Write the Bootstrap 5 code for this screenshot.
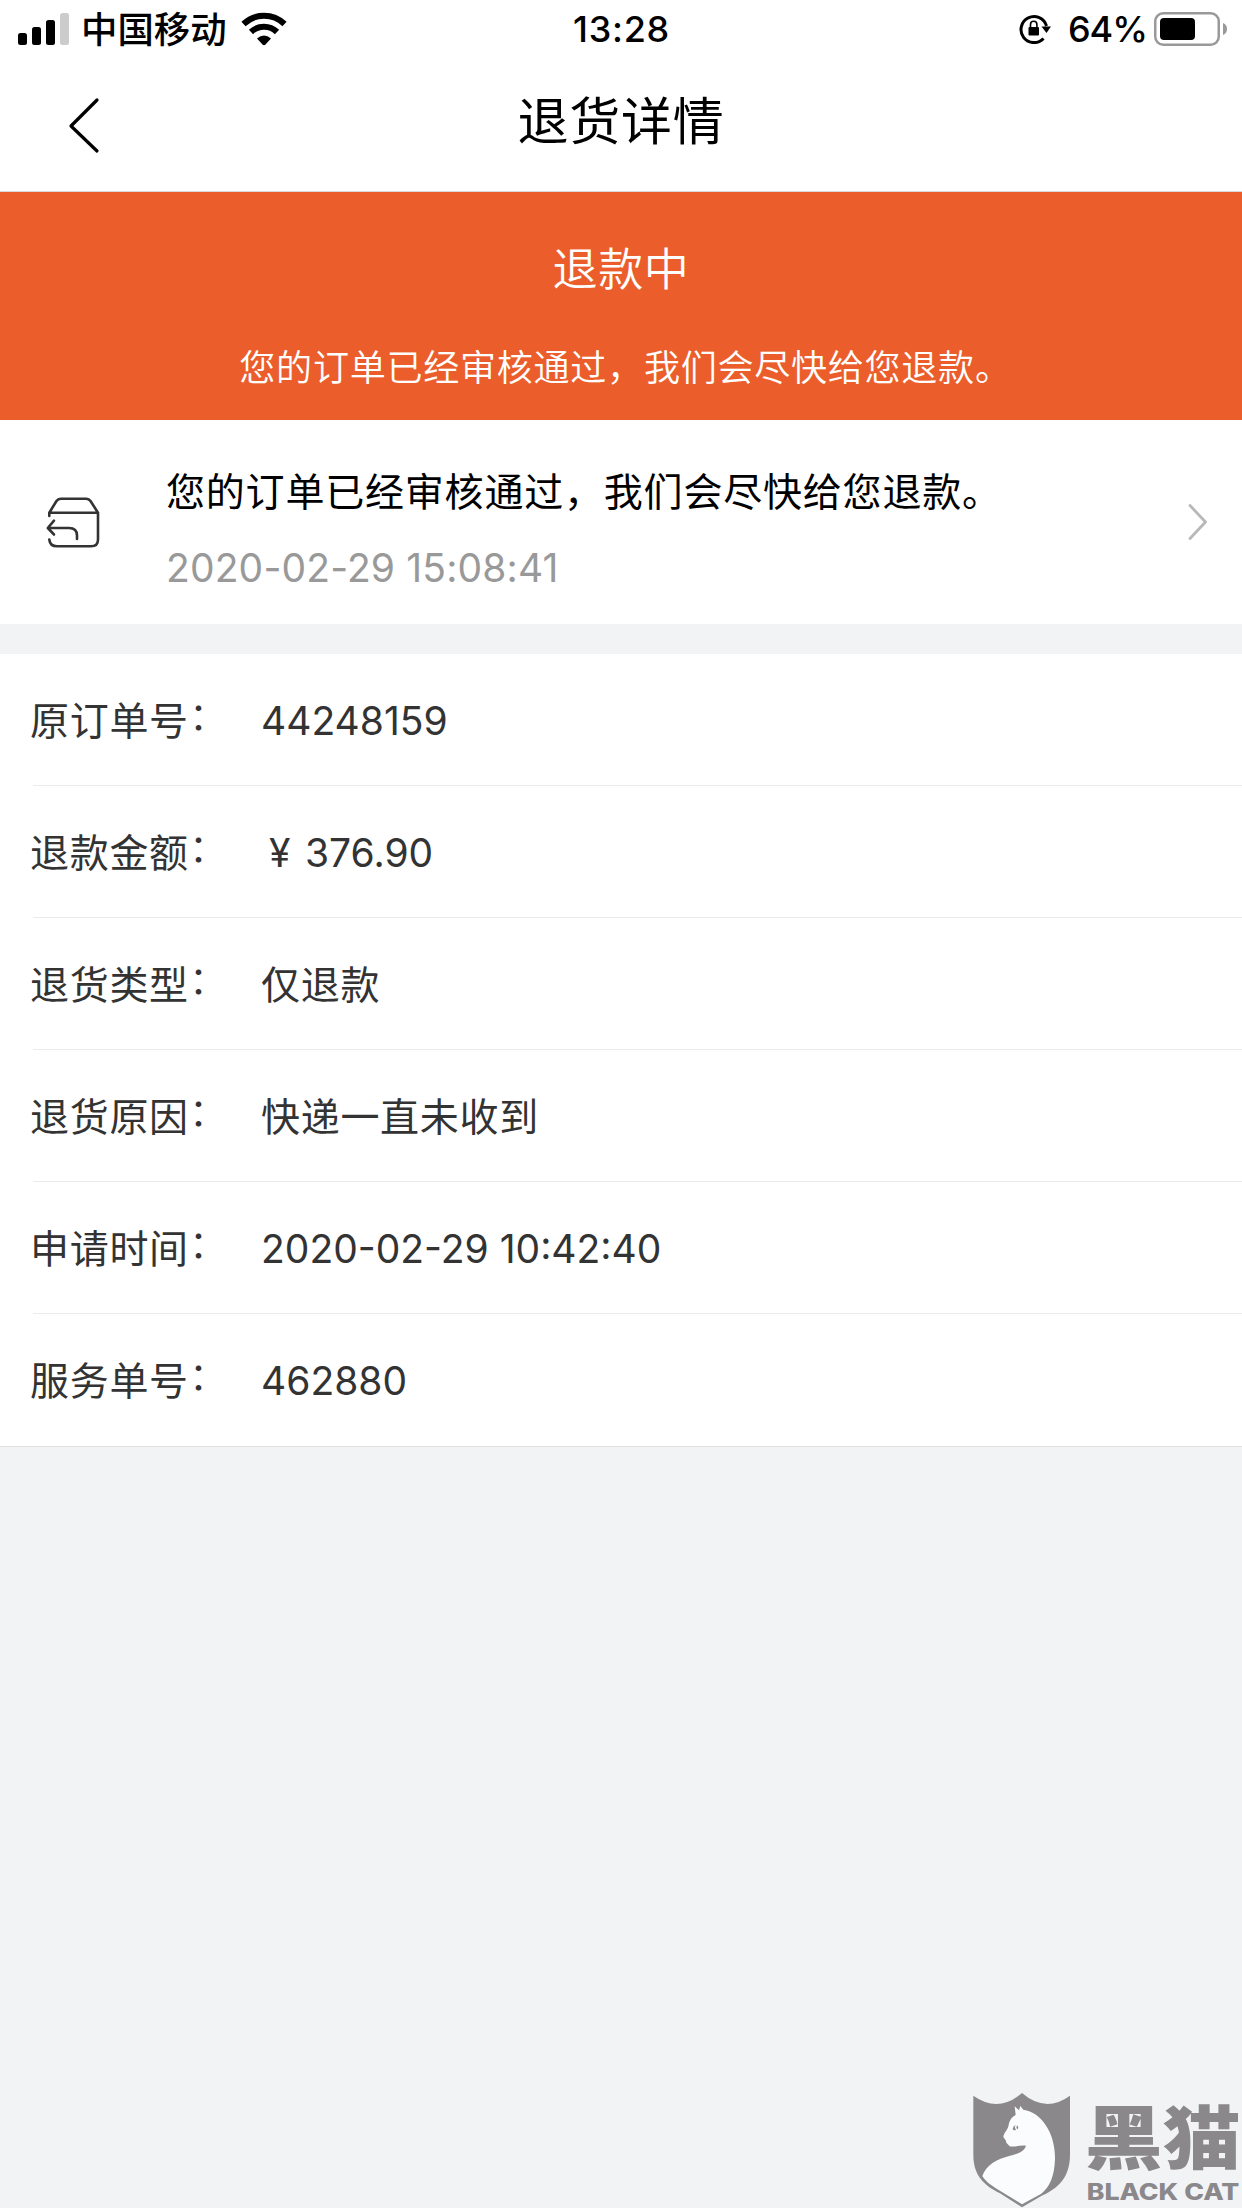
<!DOCTYPE html>
<html lang="zh-CN">
<head>
<meta charset="utf-8">
<meta name="viewport" content="width=device-width, initial-scale=1">
<title>退货详情</title>
<link rel="stylesheet" href="https://cdn.jsdelivr.net/npm/bootstrap@5.3.0/dist/css/bootstrap.min.css">
<style>
  body { font-family: Inter, "Noto Sans CJK SC", sans-serif; background: #f2f3f5; color: #333; font-size: 39px; line-height: 1.2; min-height: 2208px; }
  svg { display: block; flex: none; }
  .cjk { font-family: "Noto Sans CJK SC", sans-serif; letter-spacing: .7px; white-space: nowrap; }
  .statusbar { height: 60px; padding: 0 14px 2px 18px; color: #000; font-size: 36px; font-weight: 500; }
  .statusbar .side { flex: 1 1 0; }
  .carrier { font-size: 36.4px; letter-spacing: 0; margin: 0 14px 0 12px; padding-bottom: 2px; }
  .clock { letter-spacing: .7px; padding: 2px 3px 0 0; }
  .pct { padding-top: 2px; margin: 0 7px 0 16px; letter-spacing: -1px; }
  .titlebar { height: 132px; border-bottom: 1px solid #d9d9d9; color: #000; }
  .titlebar h1 { font-size: 51px; line-height: 60px; padding-top: 28px; }
  .back { width: 160px; padding: 37px 0 0 68px; }
  .banner { height: 228px; background: #eb5e2b; color: #fff; font-weight: 350; }
  .banner-title { font-size: 45px; line-height: 54px; padding-top: 48px; }
  .banner-text { font-size: 36.1px; line-height: 44px; padding: 49px 0 0 9px; }
  .progress-item { height: 204px; padding: 0 34px 0 46px; }
  .progress-body { padding: 14px 0 0 65px; }
  .message { color: #000; font-size: 39px; line-height: 46px; letter-spacing: .8px; }
  .stamp { color: #999; line-height: 48px; margin-top: 32px; letter-spacing: .15px; }
  .details { margin-top: 30px; border-bottom: 1px solid #dfe0e2; }
  .detail { height: 132px; margin-left: 33px; border-bottom: 1px solid #ebebeb; }
  .detail:last-child { border-bottom: 0; }
  .detail .cjk { line-height: 50px; padding-bottom: 3px; }
  .detail dt { width: 231px; margin-left: -3px; }
  .detail dt.cjk { padding-bottom: 4px; }
  .detail dt span { display: inline-block; line-height: 40px; vertical-align: 5px; font-weight: 350; }
  .detail dd { padding-top: 3px; }
  .detail dd.cjk { padding-top: 0; }
  .yuan { display: inline-block; width: 44px; padding-left: 8px; }
  .watermark { right: 0; bottom: 0; }
</style>
</head>
<body>
<header class="bg-white">
  <div class="statusbar d-flex align-items-center">
    <div class="side d-flex align-items-center">
      <svg width="51" height="33" viewBox="0 0 51 33"><rect y="20" width="9" height="12" rx="2.5"/><rect x="14" y="14" width="9" height="18" rx="2.5"/><rect x="28" y="7" width="9" height="25" rx="2.5"/><rect x="42" width="9" height="32" rx="2.5" fill="#ccc"/></svg>
      <span class="cjk carrier">中国移动</span>
      <svg width="46" height="34" viewBox="0 0 46 34"><g fill="none" stroke="#000" stroke-width="6"><path d="M2.500 12A29.500 29.500 0 0 1 43.500 12"/><path d="M10 20A18.500 18.500 0 0 1 36 20"/></g><path d="M16 26.500Q23 20.500 30 26.500L24.500 32.500Q23 34 21.500 32.500Z"/></svg>
    </div>
    <div class="clock">13:28</div>
    <div class="side d-flex align-items-center justify-content-end">
      <svg width="33" height="30" viewBox="0 0 33 30"><path d="M24.500 24.500A13 13 0 1 1 27.500 12" fill="none" stroke="#000" stroke-width="3"/><path d="M22.500 12.500H32L27.500 19Z"/><rect x="9.500" y="13" width="10.500" height="8.500" rx="1"/><path d="M11.500 14V10.500a3.200 3.200 0 0 1 6.400 0V14" fill="none" stroke="#000" stroke-width="1.600"/></svg>
      <span class="pct">64%</span>
      <svg width="74" height="34" viewBox="0 0 74 34"><rect x="1.250" y="1.250" width="63.500" height="31.500" rx="8" fill="#fff" stroke="#999" stroke-width="2.500"/><rect x="6" y="6" width="35" height="22" rx="4"/><path d="M69 11q4 1.500 4 6t-4 6z" fill="#999"/></svg>
    </div>
  </div>
  <div class="titlebar d-flex">
    <div class="back"><svg width="32" height="58" viewBox="0 0 32 58"><path d="M29 3L3 29L29 54" fill="none" stroke="#000" stroke-width="3.200" stroke-linecap="round" stroke-linejoin="round"/></svg></div>
    <h1 class="cjk flex-fill text-center fw-normal m-0">退货详情</h1>
    <div class="back"></div>
  </div>
</header>
<main>
  <section class="banner cjk text-center">
    <div class="banner-title">退款中</div>
    <div class="banner-text">您的订单已经审核通过，我们会尽快给您退款。</div>
  </section>
  <section class="progress-item bg-white d-flex align-items-center">
    <svg width="55" height="53" viewBox="46 496 55 53"><g fill="none" stroke="#333" stroke-width="2.600" stroke-linecap="round" stroke-linejoin="round"><path d="M49.300 516V512.700L56.500 501Q58 498.700 61 498.700H86Q89 498.700 90.500 501L98 512.700V539.500Q98 546.300 91 546.300H57Q50 546.300 49.300 539.500M49.300 512.700H98"/><path d="M54 520.700L47.800 528L54 534.500M48 528H69Q77 528 77 535.500V539"/></g></svg>
    <div class="progress-body flex-fill">
      <div class="message cjk">您的订单已经审核通过，我们会尽快给您退款。</div>
      <div class="stamp">2020-02-29 15:08:41</div>
    </div>
    <svg width="20" height="38" viewBox="0 0 20 38"><path d="M2 2.500L17.500 19L2 35.500" fill="none" stroke="#b8b8b8" stroke-width="2.800" stroke-linecap="round" stroke-linejoin="round"/></svg>
  </section>
  <dl class="details bg-white mb-0">
    <div class="detail d-flex align-items-center"><dt class="cjk fw-normal">原订单号<span>：</span></dt><dd class="m-0">44248159</dd></div>
    <div class="detail d-flex align-items-center"><dt class="cjk fw-normal">退款金额<span>：</span></dt><dd class="m-0"><span class="yuan">¥</span>376.90</dd></div>
    <div class="detail d-flex align-items-center"><dt class="cjk fw-normal">退货类型<span>：</span></dt><dd class="cjk m-0">仅退款</dd></div>
    <div class="detail d-flex align-items-center"><dt class="cjk fw-normal">退货原因<span>：</span></dt><dd class="cjk m-0">快递一直未收到</dd></div>
    <div class="detail d-flex align-items-center"><dt class="cjk fw-normal">申请时间<span>：</span></dt><dd class="m-0">2020-02-29 10:42:40</dd></div>
    <div class="detail d-flex align-items-center"><dt class="cjk fw-normal">服务单号<span>：</span></dt><dd class="m-0">462880</dd></div>
  </dl>
</main>
<div class="watermark position-absolute">
  <svg width="282" height="128" viewBox="0 0 846 384" fill="#8b888b">
    <path d="M40 47Q115 100 186 39Q257 100 330 47V225C330 300 285 330 240 350L186 382L120 340C70 315 40 285 40 225Z"/>
    <path fill="#fafcfe" d="M167 105L164 79L177 91L181 78L190 89C245 97 286 160 285 235C284 290 268 322 244 341L186 373L110 326C88 313 72 298 67 288C78 255 110 237 150 227C180 220 194 211 198 197C180 194 165 202 149 199L139 188L138 182L130 171C131 158 144 150 146 135C149 119 157 110 167 105Z"/>
    <path d="M158 147Q159 138 167 135L164 142L168 150Q160 153 158 147ZM171 136Q177 140 173 148L169 144Z"/>
    <text x="374" y="252" font-family="'Noto Sans CJK SC', sans-serif" font-weight="900" font-size="208" textLength="468" lengthAdjust="spacingAndGlyphs">黑猫</text>
    <text x="380" y="361" font-family="Inter, sans-serif" font-weight="800" font-size="67" textLength="458" lengthAdjust="spacingAndGlyphs">BLACK CAT</text>
  </svg>
</div>
<script src="https://cdn.jsdelivr.net/npm/bootstrap@5.3.0/dist/js/bootstrap.bundle.min.js"></script>
</body>
</html>
